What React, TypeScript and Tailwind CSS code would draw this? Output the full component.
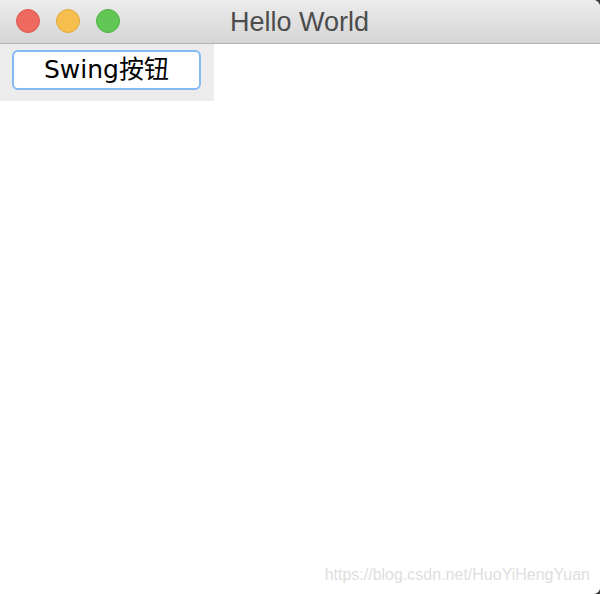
import React from "react";

export default function App() {
  return (
    <div className="w-[600px] h-[594px] bg-[#3a3a3a] relative overflow-hidden" style={{ fontFamily: '"Liberation Sans", "Noto Sans CJK SC", sans-serif' }}>
      <div className="absolute left-0 top-0 w-[20px] h-[20px] bg-[#e8e8e8]" />
      <div className="relative w-full h-full flex flex-col rounded-tr-[7px] rounded-br-[7px] overflow-hidden bg-white">
        <div className="h-[44px] shrink-0 bg-gradient-to-b from-[#ececec] to-[#d5d5d5] border-b border-[#b1b1b1] flex items-center relative">
          <div className="flex items-center gap-[16px] pl-[16px] pb-[2px]">
            <div className="w-[24px] h-[24px] rounded-full bg-[#ee6a5f] border border-[#dd5a4f]" />
            <div className="w-[24px] h-[24px] rounded-full bg-[#f5be4f] border border-[#e0a93c]" />
            <div className="w-[24px] h-[24px] rounded-full bg-[#62c655] border border-[#52b045]" />
          </div>
          <div className="absolute left-[230px] top-[6px] text-[27px] leading-[32px] text-[#4d4d4d]">Hello World</div>
        </div>
        <div className="flex-1 bg-white">
          <div className="w-[214px] h-[57px] bg-[#ececec] pl-[12px] pt-[6px]">
            <div
              className="w-[189px] h-[40px] rounded-[6px] border-[2px] border-[#86b8f4] bg-white flex items-center justify-center text-[25px] text-black pb-[1px]"
              style={{ fontFamily: '"DejaVu Sans", "Noto Sans CJK SC", sans-serif' }}
            >
              Swing按钮
            </div>
          </div>
        </div>
        <div className="absolute right-[10px] bottom-[7px] text-[16px] text-[#dedede]">https://blog.csdn.net/HuoYiHengYuan</div>
      </div>
    </div>
  );
}
